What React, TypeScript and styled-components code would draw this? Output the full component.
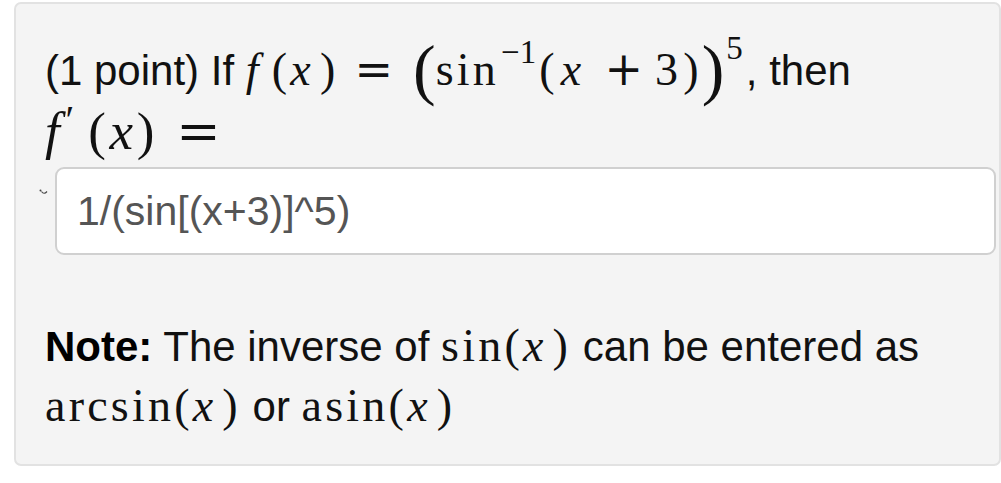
import React from "react";
import styled, { createGlobalStyle } from "styled-components";

const Global = createGlobalStyle`
  html, body { margin: 0; padding: 0; background: #ffffff; }
  body { font-family: "Liberation Sans", Arial, Helvetica, sans-serif; color: #111; }
`;

const Page = styled.div`
  padding: 2px 0 0 14px;
`;

const Panel = styled.section`
  box-sizing: border-box;
  width: 987px;
  height: 464px;
  background: #f4f4f4;
  border: 2px solid #e2e2e2;
  border-radius: 7px;
  padding: 35px 0 0 29px;
`;

const Line = styled.div<{ $lh: number }>`
  font-size: 42px;
  line-height: ${(p) => p.$lh}px;
  white-space: nowrap;
  color: #111;
`;

const Math = styled.span<{ $size?: number }>`
  font-family: "Liberation Serif", "Times New Roman", serif;
  font-size: ${(p) => p.$size ?? 46}px;
  line-height: 1;
  letter-spacing: 0.07em;
`;

const V = styled.i<{ $pad?: number; $pl?: number }>`
  font-style: italic;
  padding-left: ${(p) => p.$pl ?? 0}px;
  padding-right: ${(p) => p.$pad ?? 6}px;
`;

const Fn = styled.span`
  font-style: normal;
`;

const Op = styled.span<{ $m: string }>`
  font-family: "DejaVu Serif", serif;
  font-weight: 300;
  letter-spacing: 0;
  margin: ${(p) => p.$m};
`;

const Num = styled.span<{ $mr: number }>`
  margin-right: ${(p) => p.$mr}px;
`;

const Big = styled.span`
  font-size: 68px;
  line-height: 0;
  letter-spacing: 0;
  vertical-align: -0.1em;
`;

const Sup = styled.sup<{ $raise: number; $ml: number; $mr: number }>`
  font-size: 33px;
  line-height: 0;
  letter-spacing: 0;
  vertical-align: ${(p) => p.$raise}px;
  margin: 0 ${(p) => p.$mr}px 0 ${(p) => p.$ml}px;
`;

const Prime = styled.span`
  font-size: 40px;
  vertical-align: 16px;
  line-height: 0;
  letter-spacing: 0;
  margin: 0 14px 0 2px;
`;

const AnswerRow = styled.div`
  display: flex;
  align-items: flex-start;
  margin: 0 0 0 -6px;
`;

const Mark = styled.span`
  display: block;
  width: 16px;
  margin-top: 15px;
  flex: none;
`;

const AnswerInput = styled.input`
  box-sizing: border-box;
  width: 941px;
  height: 88px;
  border: 2px solid #d0d0d0;
  border-radius: 9px;
  background: #ffffff;
  padding: 0 0 0 20px;
  font-family: "Liberation Sans", Arial, Helvetica, sans-serif;
  font-size: 41px;
  color: #555;
  outline: none;
`;

const Note = styled.div`
  margin-top: 62px;
`;

const Bold = styled.b`
  font-weight: 700;
  color: #000;
`;

export default function App() {
  return (
    <>
      <Global />
      <Page>
        <Panel>
          <Line $lh={64}>
            (1 point) If{" "}
            <Math>
              <V $pad={10}>f</V>(<V>x</V>)<Op $m="0 20px 0 16px">=</Op>
              <Big>(</Big>
              <Fn>sin</Fn>
              <Sup $raise={22} $ml={2} $mr={3}>−1</Sup>(<V $pl={3} $pad={8}>x</V>
              <Op $m="0 12px 0 12px">+</Op>
              <Num $mr={2}>3</Num>)
              <Big>)</Big>
              <Sup $raise={26} $ml={2} $mr={3}>5</Sup>
            </Math>
            , then
          </Line>
          <Line $lh={64}>
            <Math $size={53}>
              <V $pad={0}>f</V>
              <Prime>′</Prime>(<V $pad={0}>x</V>)<Op $m="0 0 0 18px">=</Op>
            </Math>
          </Line>
          <AnswerRow>
            <Mark>
              <svg width="9" height="7" viewBox="0 0 9 7">
                <circle cx="1.5" cy="1.5" r="1" fill="#444" />
                <path d="M2.5 2.5 Q5 6 8 2.5" stroke="#444" strokeWidth="1.2" fill="none" />
              </svg>
            </Mark>
            <AnswerInput defaultValue="1/(sin[(x+3)]^5)" aria-label="answer" />
          </AnswerRow>
          <Note>
            <Line $lh={60}>
              <Bold>Note:</Bold> The inverse of{" "}
              <Math>
                <Fn>sin</Fn>(<V>x</V>)
              </Math>{" "}
              can be entered as
            </Line>
            <Line $lh={60}>
              <Math>
                <Fn>arcsin</Fn>(<V>x</V>)
              </Math>{" "}
              or{" "}
              <Math>
                <Fn>asin</Fn>(<V>x</V>)
              </Math>
            </Line>
          </Note>
        </Panel>
      </Page>
    </>
  );
}
